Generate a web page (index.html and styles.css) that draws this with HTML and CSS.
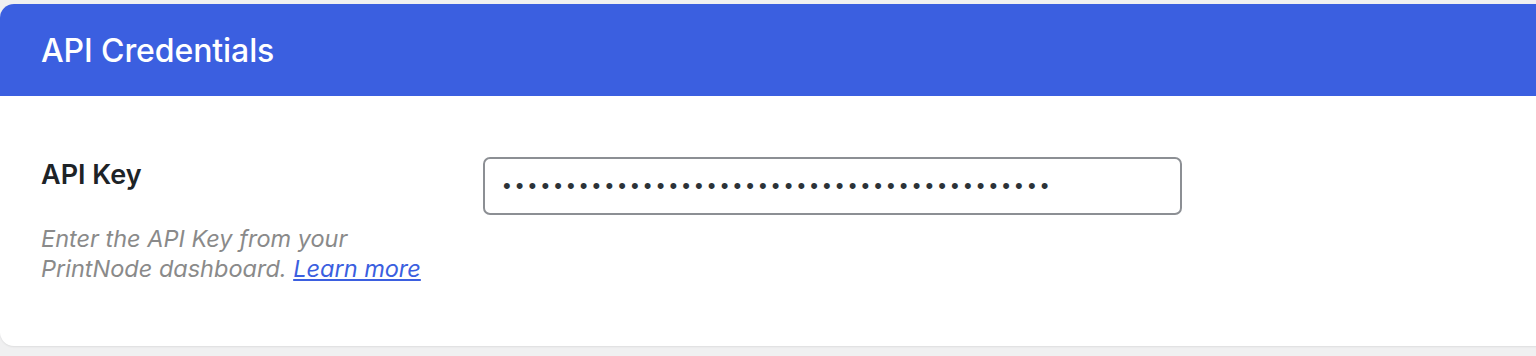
FILE: index.html
```html
<!DOCTYPE html>
<html>
<head>
<meta charset="utf-8">
<link rel="stylesheet" href="styles.css">
</head>
<body>
<section class="card">
  <header class="card-header">
    <h2 class="card-title">API Credentials</h2>
  </header>
  <div class="card-body">
    <div class="field-row">
      <div class="field-info">
        <label class="field-label" for="api-key">API Key</label>
        <p class="field-desc">Enter the API Key from your PrintNode dashboard. <a href="#" class="link">Learn more</a></p>
      </div>
      <div class="field-control">
        <input id="api-key" class="text-input" type="password" value="abcdefghijklmnopqrstuvwxyz0123456789abcdefg">
      </div>
    </div>
  </div>
</section>
</body>
</html>
```
FILE: styles.css
```css
html, body {
  margin: 0;
  padding: 0;
}
body {
  background: #f0f0f1;
  font-family: Inter, "Noto Sans", "Liberation Sans", sans-serif;
  overflow: hidden;
  height: 356px;
}
.card {
  margin-top: 4px;
  width: calc(100% + 40px);
  background: #fff;
  border-radius: 14px;
  overflow: hidden;
  box-shadow: 0 1px 2px rgba(0,0,0,0.08);
}
.card-header {
  background: #3b5fe0;
  height: 92px;
  display: flex;
  align-items: center;
  padding-left: 41px;
}
.card-title {
  margin: 0;
  color: #fff;
  font-size: 32px;
  font-weight: 500;
  letter-spacing: -0.1px;
}
.card-body {
  padding: 61px 0 62px 41px;
}
.field-row {
  display: flex;
}
.field-info {
  width: 442px;
  flex: none;
}
.field-label {
  display: block;
  font-size: 27px;
  line-height: 33px;
  font-weight: 600;
  color: #1d2327;
  margin-top: 1px;
}
.field-desc {
  margin: 33px 0 0;
  width: 400px;
  font-size: 23.5px;
  line-height: 30px;
  font-style: italic;
  color: #8a8a8a;
}
.link {
  color: #3b5fe0;
  text-decoration: underline;
}
.text-input {
  box-sizing: border-box;
  width: 699px;
  height: 58px;
  border: 2px solid #8c8f94;
  border-radius: 7px;
  padding: 0 18px;
  font-family: "Liberation Sans", sans-serif;
  font-size: 22px;
  letter-spacing: 5.1px;
  color: #2c3338;
  outline: none;
}
```
